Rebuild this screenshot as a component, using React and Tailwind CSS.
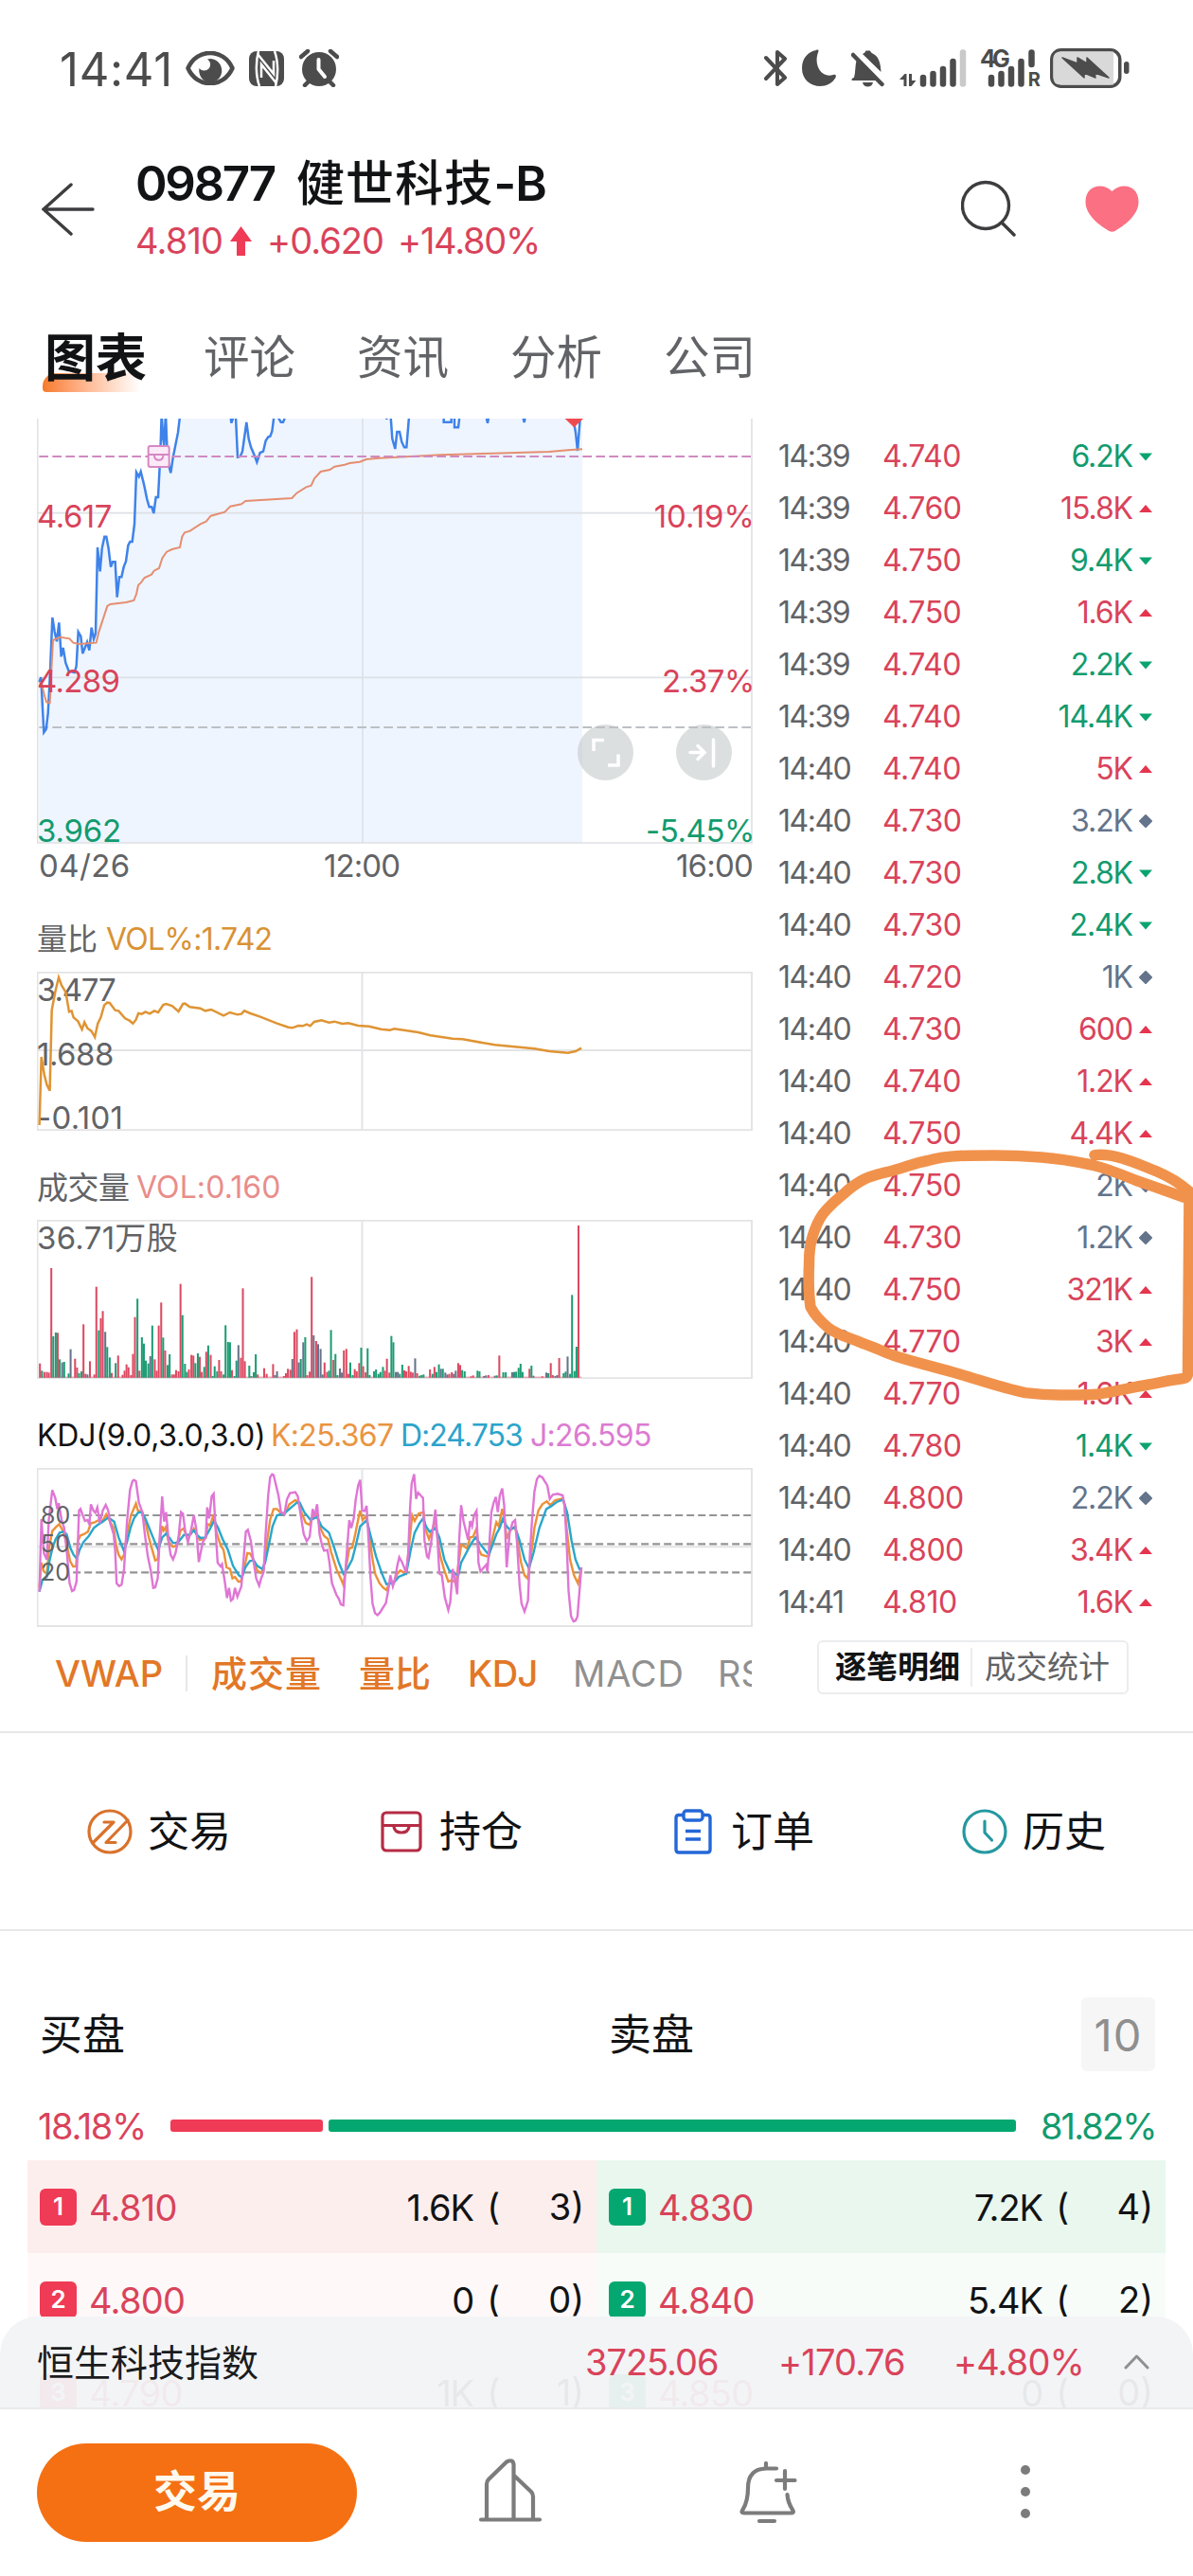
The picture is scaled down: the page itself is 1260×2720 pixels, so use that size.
import React from 'react';

const RED = '#d9435a';
const GREEN = '#129b6e';
const SLATE = '#64748b';

const trades = [
    ['14:39', '4.740', '6.2K', 'down'],
    ['14:39', '4.760', '15.8K', 'up'],
    ['14:39', '4.750', '9.4K', 'down'],
    ['14:39', '4.750', '1.6K', 'up'],
    ['14:39', '4.740', '2.2K', 'down'],
    ['14:39', '4.740', '14.4K', 'down'],
    ['14:40', '4.740', '5K', 'up'],
    ['14:40', '4.730', '3.2K', 'flat'],
    ['14:40', '4.730', '2.8K', 'down'],
    ['14:40', '4.730', '2.4K', 'down'],
    ['14:40', '4.720', '1K', 'flat'],
    ['14:40', '4.730', '600', 'up'],
    ['14:40', '4.740', '1.2K', 'up'],
    ['14:40', '4.750', '4.4K', 'up'],
    ['14:40', '4.750', '2K', 'flat'],
    ['14:40', '4.730', '1.2K', 'flat'],
    ['14:40', '4.750', '321K', 'up'],
    ['14:40', '4.770', '3K', 'up'],
    ['14:40', '4.770', '1.6K', 'up'],
    ['14:40', '4.780', '1.4K', 'down'],
    ['14:40', '4.800', '2.2K', 'flat'],
    ['14:40', '4.800', '3.4K', 'up'],
    ['14:41', '4.810', '1.6K', 'up'],
];

const bids = [
    ['1', '4.810', '1.6K', '3'],
    ['2', '4.800', '0', '0'],
    ['3', '4.790', '1K', '1'],
];

const asks = [
    ['1', '4.830', '7.2K', '4'],
    ['2', '4.840', '5.4K', '2'],
    ['3', '4.850', '0', '0'],
];

const priceLine = '124,900 130,886 139,1060 146,1050 152,1000 158,890 166,696 173,740 180,772 187,712 194,820 200,792 208,840 218,866 236,870 242,850 248,742 256,756 262,810 269,792 276,774 283,800 290,728 297,764 303,746 309,474 317,550 323,478 331,440 337,440 344,478 351,536 357,520 365,520 371,632 378,568 385,568 392,536 399,518 406,468 412,456 419,456 426,400 432,236 440,250 446,234 456,274 466,322 473,346 481,346 487,366 494,315 501,315 508,180 512,50 517,130 520,150 525,50 529,150 534,210 541,238 548,190 564,110 571,50 571,30 728,30 733,80 740,60 747,60 753,188 761,186 768,170 781,78 788,130 795,156 806,182 814,204 824,174 834,170 842,136 850,124 856,122 862,106 868,60 880,60 890,77 897,77 904,60 904,30 1218,30 1225,68 1232,40 1238,60 1243,130 1252,162 1258,108 1266,108 1273,140 1281,157 1288,157 1296,60 1296,30 1406,30 1406,77 1430,77 1430,30 1440,60 1440,94 1452,94 1456,60 1456,30 1534,30 1545,80 1554,30 1650,30 1661,78 1670,30 1810,30 1824,110 1830,168 1838,66 1845,30';

const vwapLine = '124,900 132,905 140,940 147,964 158,966 163,860 168,768 190,758 220,763 232,776 250,780 305,776 313,742 340,660 350,654 400,648 424,642 432,622 438,594 448,584 458,570 480,560 488,548 504,540 514,508 528,488 545,480 570,474 577,440 585,427 602,422 635,400 653,392 668,374 712,362 730,344 765,337 778,327 925,318 940,302 970,283 986,278 996,256 1016,234 1045,228 1060,218 1092,212 1108,207 1140,203 1160,195 1200,191 1300,186 1400,181 1560,176 1740,171 1800,166 1845,163';

const volRatioLine = '80,684 84,468 90,525 95,556 101,575 105,320 112,262 119,216 125,242 133,262 140,325 145,322 149,343 158,355 166,381 171,358 177,377 185,386 192,405 198,362 204,343 211,304 217,296 222,297 233,320 240,322 253,346 262,353 269,362 275,350 280,330 287,332 294,325 303,331 312,322 320,327 330,303 336,300 348,306 361,324 370,300 374,299 384,310 405,314 415,322 427,318 452,337 465,327 480,334 488,332 494,322 506,330 525,340 560,362 583,374 591,376 603,369 612,370 620,365 627,370 635,357 650,352 665,359 676,356 692,363 704,361 724,369 746,371 770,380 788,383 797,379 845,390 870,400 915,410 935,412 1000,430 1080,442 1110,450 1148,455 1163,450 1175,440';

const jLine = '80,602 84,372 89,480 95,500 99,375 106,280 112,305 116,340 119,322 125,375 130,400 135,470 141,575 146,600 150,597 155,570 160,345 163,340 168,362 172,378 177,375 181,388 184,325 189,345 193,352 197,335 202,385 208,345 214,327 219,345 223,385 230,420 233,470 236,575 241,584 246,580 251,530 257,380 263,280 268,252 271,248 275,252 281,320 288,350 293,420 299,490 305,535 310,590 314,588 319,560 323,430 328,300 332,380 336,350 341,440 345,485 350,500 355,480 361,430 366,350 370,355 375,415 380,445 386,410 392,360 397,405 402,508 410,445 416,430 419,335 423,370 428,300 432,292 436,405 440,510 446,522 449,515 455,575 459,622 463,590 467,630 471,625 475,590 480,618 488,585 492,510 497,412 501,406 507,440 512,500 518,560 524,583 528,560 533,540 537,420 542,300 546,240 550,230 553,232 558,265 563,298 568,350 575,356 580,310 586,290 597,287 602,300 608,360 614,420 620,442 626,428 632,340 636,365 641,325 646,420 651,455 655,472 662,470 666,510 671,575 680,612 685,625 689,642 694,645 698,540 706,375 710,400 715,370 719,310 724,265 728,248 732,345 737,346 741,330 745,440 749,560 753,640 758,670 763,676 768,668 780,638 785,595 789,550 794,585 798,565 803,520 807,493 813,510 821,542 825,480 829,330 832,260 837,230 841,308 845,288 855,305 858,440 863,490 866,495 871,450 876,390 880,342 884,430 888,545 893,550 899,620 906,660 910,635 915,530 919,560 924,610 928,440 932,328 937,380 946,438 950,378 954,395 958,360 963,346 967,510 971,538 983,516 985,540 989,450 993,350 998,318 1002,302 1006,350 1010,298 1015,275 1019,330 1024,525 1030,415 1036,382 1041,375 1045,450 1050,580 1054,640 1060,665 1067,630 1071,480 1075,380 1080,285 1085,245 1090,235 1096,240 1106,265 1111,308 1117,295 1127,292 1137,297 1141,330 1145,440 1149,600 1154,680 1159,696 1163,694 1167,680 1171,600 1175,525';

const kLine = '80,590 84,510 89,538 95,545 100,460 106,410 113,398 120,388 128,410 135,450 142,505 148,522 154,522 158,440 163,424 170,420 178,412 184,385 192,382 200,375 207,380 215,357 222,378 230,400 235,455 240,485 246,500 251,485 257,420 265,360 275,323 279,345 288,350 294,380 301,430 308,470 314,503 319,500 323,440 328,394 331,408 335,398 341,445 350,460 358,455 365,408 371,402 378,425 386,420 392,402 398,420 404,438 411,435 416,432 420,388 425,392 432,357 438,415 446,455 452,470 458,525 465,530 470,560 475,555 482,570 487,570 493,535 500,480 506,482 512,500 520,535 527,542 533,530 540,440 546,375 553,340 560,340 567,352 576,354 585,325 597,312 603,318 609,350 618,384 626,390 632,365 640,352 646,395 655,425 663,435 669,475 680,530 690,565 694,580 700,520 706,465 712,462 718,420 725,365 728,345 733,375 740,362 745,400 752,490 758,545 767,575 775,590 781,597 787,575 795,575 803,545 809,535 821,545 826,470 833,360 838,378 846,355 856,350 860,405 867,435 873,410 880,372 884,430 890,490 897,530 906,570 914,565 922,575 926,520 932,455 938,458 944,465 950,430 956,428 963,402 968,470 973,485 984,490 988,490 994,440 1003,382 1008,395 1015,340 1020,375 1024,435 1030,410 1041,395 1046,440 1053,510 1060,550 1066,560 1072,500 1080,400 1088,345 1096,325 1105,316 1112,328 1122,312 1135,308 1140,320 1145,400 1152,500 1160,550 1168,576 1175,530';

const dLine = '80,602 86,565 95,555 101,500 107,460 113,435 121,415 128,412 135,420 143,465 149,485 156,498 161,470 169,445 180,425 190,400 200,388 208,380 219,367 231,380 240,430 250,470 256,450 264,400 271,370 279,352 286,350 294,370 303,405 312,440 320,470 328,430 336,418 343,432 350,448 360,446 372,422 382,422 392,408 400,425 406,432 415,430 424,405 433,377 441,400 450,435 461,470 471,520 483,550 489,557 496,525 505,505 513,503 520,520 530,530 536,510 544,450 551,395 560,360 575,354 585,340 600,320 606,320 615,350 628,375 641,365 650,395 665,415 675,460 685,510 694,545 702,530 712,500 720,450 728,395 741,376 750,430 760,490 772,545 781,578 795,575 806,555 821,545 830,470 838,415 848,385 855,370 861,395 868,412 876,405 880,400 888,430 898,500 908,535 916,540 926,552 932,510 942,480 952,450 961,430 970,450 980,470 988,485 995,455 1003,420 1010,400 1016,372 1024,395 1030,405 1041,398 1050,440 1060,500 1069,528 1078,480 1090,400 1104,340 1113,332 1125,318 1138,310 1146,350 1155,440 1163,500 1171,530 1175,528';

// colour letter, x and height of every volume bar
const volumeBars = 'r81:45 g85:22 r90:18 r95:18 r99:16 r104:347 g108:131 g113:143 r117:142 g121:58 s126:48 g130:50 g139:13 s143:90 r152:60 r156:32 g160:14 g165:20 r169:169 r173:12 s177:10 r182:52 r191:10 r195:288 g200:150 r204:188 r208:211 s213:145 g217:97 g222:64 r226:15 g234:46 r239:70 r248:9 r252:22 r256:42 r260:33 r265:8 r269:75 r273:192 g278:250 r282:22 g287:128 g291:108 g295:54 g300:45 s304:68 g308:165 r313:58 r317:22 r321:165 r326:238 g330:127 r334:86 g339:40 g343:74 r348:10 r352:10 r356:24 r361:20 r365:297 g369:198 g374:44 g378:18 r382:26 r387:72 r391:70 g395:46 g400:77 r404:66 r408:18 g413:34 r417:82 g421:102 r426:72 g430:5 g434:36 g439:20 r443:56 r447:20 g452:10 g456:166 g461:113 g465:112 r469:24 g474:5 g478:54 s482:103 r487:63 r491:283 r495:52 g504:38 g508:5 g513:17 g517:74 r521:10 r534:30 r539:12 r552:43 s556:8 s560:20 r574:5 r578:14 r582:28 r587:25 s591:59 r595:145 r600:153 s604:48 g608:59 s613:112 g617:128 r621:8 r626:19 r630:319 s634:134 r639:116 s643:106 s648:91 s652:10 r656:48 r661:18 g665:22 g669:151 r674:56 g678:75 g682:8 s687:29 s691:16 r695:86 r700:91 r704:12 g708:48 g713:8 r717:27 r721:20 r726:46 g730:95 r734:36 r739:17 g743:93 g747:8 g756:20 g760:26 g765:12 g769:18 g774:34 r778:22 r782:60 r787:16 g791:132 g795:112 s800:18 s804:18 g808:12 g813:41 r817:23 r821:20 r826:37 r830:19 r834:16 s839:61 r843:14 g848:6 g852:8 g856:10 r869:26 g874:12 r878:34 g882:18 g887:42 s891:28 g895:28 s900:16 s904:10 r908:12 r913:17 s917:12 s921:22 r926:46 r930:40 g934:24 g939:20 r952:4 r956:7 g965:22 g969:20 s978:5 s982:7 r987:8 s1000:6 g1004:7 r1009:70 g1017:17 g1022:17 s1035:17 g1039:18 g1043:19 g1048:31 g1052:44 g1056:18 r1070:28 g1074:38 s1078:6 r1096:4 s1104:16 g1108:14 r1113:46 r1117:8 s1122:5 s1126:8 r1130:62 g1139:14 g1143:19 s1147:67 g1152:12 g1156:262 g1161:21 g1165:98 r1169:482'
    .split(' ')
    .map(b => ({ c: b[0], x: Number(b.slice(1).split(':')[0]), h: Number(b.split(':')[1]) }));

const barColor = { r: '#dc4a62', g: '#1d9c74', s: '#66738a' };

function StatusBar() {
    return (
        <div className="flex h-[144px] items-center pl-[63px] pr-[67px] text-[#4c4c4c]">
            <span className="w-[133px] pt-0.5 text-[49px] leading-none tracking-[0.7px]">14:41</span>
            <svg width="52" height="36" viewBox="0 0 52 36" className="mr-[15px]">
                <path d="M2.500 18C12 -3.500 40 -3.500 49.500 18C40 39.500 12 39.500 2.500 18Z" fill="none" stroke="currentColor" strokeWidth="4.500" strokeLinejoin="round" />
                <path d="M23 8.500A12 12.500 0 1 1 14.500 18A6.500 6.500 0 1 0 23 8.500Z" fill="currentColor" />
            </svg>
            <svg width="37" height="37" viewBox="0 0 37 37" className="mr-4">
                <rect width="37" height="37" rx="8" fill="currentColor" />
                <path d="M10 0C7 11 7 26 11 37M27 0C31 11 31 26 28 37" fill="none" stroke="#fff" strokeWidth="2.500" />
                <path d="M9 3L26 24V10M29 34L13 14V28" fill="none" stroke="#fff" strokeWidth="2.500" />
            </svg>
            <svg width="42" height="40" viewBox="0 0 42 40">
                <circle cx="21" cy="21" r="18" fill="currentColor" />
                <path d="M2 8L9 2M40 8L33 2M6 38L11 33M36 38L31 33" stroke="currentColor" strokeWidth="4.500" strokeLinecap="round" />
                <path d="M20.500 11V21L27 29" fill="none" stroke="#fff" strokeWidth="4" strokeLinecap="round" strokeLinejoin="round" />
            </svg>
            <svg width="24" height="40" viewBox="0 0 24 40" className="ml-auto mr-4">
                <path d="M2 9L22 30L14 37V3L22 10L2 31" fill="none" stroke="currentColor" strokeWidth="4" strokeLinecap="round" strokeLinejoin="round" />
            </svg>
            <svg width="36" height="40" viewBox="0 0 36 40" className="mr-4">
                <path d="M15 1C17 0 18 1 17.200 3C12 16 20 31 33 27C35.500 26.300 36.500 27.500 35.500 30C27 45 0 41 0 20C0 9 7 2.500 15 1Z" fill="currentColor" />
            </svg>
            <svg width="35" height="40" viewBox="0 0 35 40" className="mr-4">
                <path d="M5.500 12L28 33H1.500C-.5 33 .5 30.500 3 30C4.500 25 4 18 5.500 12ZM12 5C14 4 15 3 15.500 1.500H20C20.500 3 21.500 4 23.500 5C29 8 31 14 31.500 24ZM12 35H23C22 41 13 41 12 35Z" fill="currentColor" />
                <path d="M2 6L32.500 37" stroke="currentColor" strokeWidth="4.500" strokeLinecap="round" />
            </svg>
            <svg width="71" height="40" viewBox="0 0 71 40" className="mr-[14px]">
                <path d="M0 32L5.500 26H7.500V39H4.500V32ZM17.500 33L12.500 39H10V26H13V33Z" fill="currentColor" />
                <path d="M25 30V36.500M35.500 26V36.500M46 21V36.500M56.500 13V36.500" stroke="currentColor" strokeWidth="6.500" strokeLinecap="round" />
                <path d="M67 3.500V36.500" stroke="#c9c9c9" strokeWidth="6.500" strokeLinecap="round" />
            </svg>
            <div className="relative mr-[13px] h-10 w-[61px]">
                <svg width="61" height="40" viewBox="0 0 61 40">
                    <path d="M12 30V36.500M22.500 26V36.500M33 21V36.500M43.500 13V36.500M54.500 3.500V16" stroke="currentColor" strokeWidth="6.500" strokeLinecap="round" />
                </svg>
                <span className="absolute left-0 top-0 text-[25px] font-bold leading-[20px] tracking-[-4px]">4G</span>
                <span className="absolute right-0 top-6 text-[20px] font-bold leading-[16px] tracking-[-3px]">R</span>
            </div>
            <svg width="84" height="42" viewBox="0 0 84 42">
                <rect x="1.750" y="1.750" width="72" height="38.500" rx="10" fill="#fff" stroke="currentColor" strokeWidth="3.500" />
                <path d="M11 3.500H67V38.500H11Q3.500 38.500 3.500 31V11Q3.500 3.500 11 3.500Z" fill="#d9d9d9" />
                <path d="M13 10L29 16V10L39 16V10L62 31L47 26L48 31L36 26V31Z" fill="currentColor" stroke="currentColor" strokeWidth="1.500" strokeLinejoin="round" />
                <rect x="78" y="14" width="5.500" height="13" rx="2.700" fill="currentColor" />
            </svg>
        </div>
    );
}

function Header() {
    return (
        <div className="flex h-[168px] pl-11 pt-[19px]">
            <div className="flex h-[116px] w-[99px] items-center">
                <svg width="56" height="58" viewBox="0 0 56 58" fill="none" stroke="#3d3d3f" strokeWidth="3.400" strokeLinecap="round">
                    <path d="M54 29H2M31 3L2 29L31 55" />
                </svg>
            </div>
            <div>
                <div className="flex h-[61px] items-center text-[51px] leading-none text-[#121314]">
                    <span className="w-[170px] font-semibold tracking-[-2.400px]">09877</span>
                    <span className="whitespace-nowrap font-medium tracking-[1.100px]">健世科技<span className="font-semibold tracking-[-0.860px]">-B</span></span>
                </div>
                <div className="flex h-[60px] items-center text-[38px] leading-none text-[#d9435a]">
                    <span className="w-[100px] tracking-[-0.830px]">4.810</span>
                    <svg width="23" height="31" viewBox="0 0 23 31" className="mr-[16px]">
                        <path d="M11.500 0L23 16H16V31H7V16H0Z" fill="#ef3b55" />
                    </svg>
                    <span className="w-[138px] tracking-[-0.970px]">+0.620</span>
                    <span className="tracking-[-1.240px]">+14.80%</span>
                </div>
            </div>
            <div className="ml-auto flex h-[114px] items-center pr-[57px]">
                <svg width="59" height="60" viewBox="0 0 59 60" fill="none" stroke="#3d3d3f" strokeWidth="3.400" strokeLinecap="round" className="mr-[72px]">
                    <circle cx="26" cy="27" r="24.500" />
                    <path d="M44 46L56 58" />
                </svg>
                <svg width="57" height="49" viewBox="0 0 57 49">
                    <path d="M28.500 6C37 -3.500 56.500 -1.500 56.500 17C56.500 32 40 43 31.500 48Q28.500 49.500 25.500 48C17 43 .5 32 .5 17C.5 -1.500 20 -3.500 28.500 6Z" fill="#fb7083" />
                </svg>
            </div>
        </div>
    );
}

function PageTabs() {
    return (
        <div className="flex h-[130px] items-center pl-[47px] pt-[3px] text-[48.500px] leading-none text-[#626366]">
            <div className="relative w-[168px] text-[54px] font-bold text-[#121314]">
                <div className="absolute -left-0.5 top-[42px] h-5 w-[103px] rounded-bl rounded-tl-[14px] bg-gradient-to-r from-[#f67a26] to-white" />
                <span className="relative">图表</span>
            </div>
            <span className="w-[162px]">评论</span>
            <span className="w-[162px]">资讯</span>
            <span className="w-[162px]">分析</span>
            <span>公司</span>
        </div>
    );
}

function PriceChart() {
    return (
        <div className="relative h-[449px] text-[33px] leading-none text-[#d9435a]">
            <svg width="756" height="449" viewBox="117 66 2268 1347" fill="none">
                <polygon points={`124,1410 ${priceLine} 1845,1410`} fill="#eef5ff" />
                <path d="M119 66V1410H2382V66M119 365H2382M119 886H2382M1149 66V1410" stroke="#dee1e5" strokeWidth="5" />
                <path d="M124 1044H2382" stroke="#bcc0c4" strokeWidth="6" strokeDasharray="29 13" />
                <polyline points={priceLine} stroke="#3f83ea" strokeWidth="7.500" />
                <polyline points={vwapLine} stroke="#e58e70" strokeWidth="6" />
                <path d="M124 186H2382" stroke="#cf8ac0" strokeWidth="6" strokeDasharray="29 13" />
                <rect x="470" y="153" width="66" height="66" rx="6" fill="#fbeaf7" stroke="#d688c4" strokeWidth="6" />
                <path d="M470 180H536M489 182Q489 197 503 197Q517 197 517 182" stroke="#d688c4" strokeWidth="6" />
                <path d="M1790 66H1848L1819 94Z" fill="#ee4b4f" />
            </svg>
            <span className="absolute left-0 top-[87px] tracking-[-0.500px]">4.617</span>
            <span className="absolute left-0 top-[261px] tracking-[-0.700px]">4.289</span>
            <span className="absolute left-0 top-[419px] tracking-[-0.200px] text-[#129b6e]">3.962</span>
            <span className="absolute -right-0.5 top-[87px]">10.19%</span>
            <span className="absolute -right-0.5 top-[261px] tracking-[-0.450px]">2.37%</span>
            <span className="absolute -right-0.5 top-[419px] tracking-[-0.450px] text-[#129b6e]">-5.45%</span>
            <svg width="59" height="59" viewBox="0 0 59 59" className="absolute left-[571px] top-[323px]" fill="none" stroke="#fff" strokeWidth="3.500">
                <circle cx="29.500" cy="29.500" r="29.500" fill="#b9bfbf" fillOpacity=".5" stroke="none" />
                <path d="M28 16.500H17V28M32 43H43V31.500" />
            </svg>
            <svg width="59" height="59" viewBox="0 0 59 59" className="absolute left-[675px] top-[323px]" fill="none" stroke="#fff" strokeWidth="3.500" strokeLinecap="round">
                <circle cx="29.500" cy="29.500" r="29.500" fill="#b9bfbf" fillOpacity=".5" stroke="none" />
                <path d="M15 29.500H29M23 22.500L30 29.500L23 36.500M39.500 16V44" />
            </svg>
        </div>
    );
}

function ChartColumn() {
    return (
        <div className="w-[756px] text-[#626366]">
            <PriceChart />
            <div className="flex h-[47px] items-center text-[33px] leading-none">
                <span className="w-[303px] pl-[2px] tracking-[0.400px]">04/26</span>
                <span className="tracking-[-0.900px]">12:00</span>
                <span className="ml-auto tracking-[-0.800px]">16:00</span>
            </div>

            {/* Volume ratio */}
            <div className="flex h-[88px] items-center pt-5 text-[32px] leading-none">
                <span className="w-[73px]">量比</span>
                <span className="tracking-[-0.700px] text-[#d99234]">VOL%:1.742</span>
            </div>
            <div className="relative h-[168px] text-[33px] leading-none">
                <svg width="756" height="168" viewBox="75 198 1446 504" preserveAspectRatio="none" fill="none">
                    <path d="M76 200H1519V700H76ZM76 447H1519M732 200V700" stroke="#e3e4e6" strokeWidth="2" vectorEffect="non-scaling-stroke" />
                </svg>
                <span className="absolute left-0 top-[3px] tracking-[-1.200px]">3.477</span>
                <span className="absolute left-0 top-[71px] tracking-[-0.500px]">1.688</span>
                <span className="absolute left-0 top-[138px] tracking-[0.300px]">-0.101</span>
                <svg width="756" height="168" viewBox="75 198 1446 504" preserveAspectRatio="none" fill="none" className="absolute left-0 top-0">
                    <polyline points={volRatioLine} stroke="#df9434" strokeWidth="2.500" vectorEffect="non-scaling-stroke" />
                </svg>
            </div>

            {/* Volume */}
            <div className="flex h-[94px] items-center pt-[26px] leading-none">
                <span className="w-[105px] text-[33px] tracking-[-0.500px]">成交量</span>
                <span className="text-[32px] tracking-[0.100px] text-[#e98d8a]">VOL:0.160</span>
            </div>
            <div className="relative h-[168px] text-[33px] leading-none">
                <svg width="756" height="168" viewBox="75 204 1446 504" preserveAspectRatio="none" fill="none">
                    <path d="M76 206H1519V706H76ZM732 206V706" stroke="#e3e4e6" strokeWidth="2" vectorEffect="non-scaling-stroke" />
                    <path d="M79 703H1175" stroke="#e7a9b5" strokeWidth="1.500" vectorEffect="non-scaling-stroke" />
                    {volumeBars.map(b => (
                        <rect key={b.x} x={b.x - 1.9} y={704 - b.h} width="3.9" height={b.h} fill={barColor[b.c]} />
                    ))}
                </svg>
                <span className="absolute left-0 top-[3px] whitespace-nowrap tracking-[0.300px]">36.71万股</span>
            </div>

            {/* KDJ */}
            <div className="flex h-[94px] items-center pt-[26px] text-[32px] leading-none">
                <span className="w-[247px] tracking-[-0.170px] text-[#121314]">KDJ(9.0,3.0,3.0)</span>
                <span className="w-[137px] tracking-[-0.690px] text-[#ea9440]">K:25.367</span>
                <span className="w-[137px] tracking-[-0.990px] text-[#2ba4cb]">D:24.753</span>
                <span className="tracking-[-0.690px] text-[#dc7bd2]">J:26.595</span>
            </div>
            <div className="relative h-[168px] text-[25px] leading-none">
                <svg width="756" height="168" viewBox="75 210 1446 504" preserveAspectRatio="none" fill="none">
                    <path d="M76 212H1519V711H76ZM76 460H1519M732 212V711" stroke="#e3e4e6" strokeWidth="2" vectorEffect="non-scaling-stroke" />
                    <path d="M148 360H1519M148 451H1519M148 541H1519" stroke="#949494" strokeWidth="2.200" strokeDasharray="8 4" vectorEffect="non-scaling-stroke" />
                    <polyline points={kLine} stroke="#ec9138" strokeWidth="2.400" vectorEffect="non-scaling-stroke" />
                    <polyline points={dLine} stroke="#2aa6cc" strokeWidth="2.400" vectorEffect="non-scaling-stroke" />
                    <polyline points={jLine} stroke="#df76d5" strokeWidth="2.400" vectorEffect="non-scaling-stroke" />
                </svg>
                <span className="absolute left-1 top-[38px]">80</span>
                <span className="absolute left-1 top-[68px]">50</span>
                <span className="absolute left-1 top-[98px]">20</span>
            </div>

            {/* Indicator switcher */}
            <div className="flex h-[97px] w-[755px] items-center overflow-hidden whitespace-nowrap pl-[19px] text-[38px] leading-none text-[#e27727]">
                <span className="w-[138px] shrink-0 font-medium">VWAP</span>
                <span className="h-[38px] w-[27px] shrink-0 border-l-2 border-[#e6e7e9]" />
                <span className="w-[156px] shrink-0 font-medium tracking-[1px]">成交量</span>
                <span className="w-[115px] shrink-0 font-medium">量比</span>
                <span className="w-[111px] shrink-0 font-medium tracking-[-0.500px]">KDJ</span>
                <span className="w-[153px] shrink-0 tracking-[0.800px] text-[#909090]">MACD</span>
                <span className="shrink-0 text-[#909090]">RSI</span>
            </div>
        </div>
    );
}

function Marker({ dir }) {
    if (dir === 'flat') {
        return <svg width="14" height="14" viewBox="0 0 14 14"><path d="M7 1L13 7L7 13L1 7Z" fill={SLATE} stroke={SLATE} strokeWidth="2" strokeLinejoin="round" /></svg>;
    }
    return (
        <svg width="14" height="14" viewBox="0 0 14 14">
            <path d={dir === 'up' ? 'M7 3L14 11H0Z' : 'M7 11.500L14 3.500H0Z'} fill={dir === 'up' ? '#e5354f' : '#0aa371'} />
        </svg>
    );
}

function TradeColumn() {
    const color = { up: RED, down: GREEN, flat: SLATE };
    return (
        <div className="relative ml-[27px] w-[438px] pt-3">
            {trades.map(([time, price, vol, dir], i) => (
                <div key={i} className="flex h-[55px] items-center pr-[43px] text-[32px] leading-none">
                    <span className="w-[110px] tracking-[-1.500px] text-[#626366]">{time}</span>
                    <span className="tracking-[-0.500px] text-[#d9435a]">{price}</span>
                    <span className="ml-auto mr-[7px] tracking-[-1.100px]" style={{ color: color[dir] }}>{vol}</span>
                    <Marker dir={dir} />
                </div>
            ))}
            <div className="ml-[41px] mt-[13px] flex h-[57px] w-[329px] items-center rounded-md border-2 border-[#ebecee] text-[33px] leading-none">
                <span className="w-[162px] border-r-2 border-[#ebecee] py-1 pl-[17px] font-bold text-[#121314]">逐笔明细</span>
                <span className="pl-[13px] text-[#626366]">成交统计</span>
            </div>
            {/* hand-drawn mark over the big print */}
            <svg width="438" height="320" viewBox="822 1180 438 320" className="pointer-events-none absolute left-0 top-[738px]" fill="none" stroke="#f1924c" strokeWidth="11.500" strokeLinecap="round" strokeLinejoin="round">
                <path d="M1156 1219.600C1178 1217 1204 1230 1222 1237C1236 1243 1248 1251 1256 1258L1254.500 1450Q1254.500 1455 1250 1455.500C1230 1458 1222 1460.500 1213 1462C1192 1465.500 1178 1469.500 1160 1472C1146 1473.300 1132 1473 1120 1473C1106 1473 1094 1472 1083 1470.600C1056 1465 1032 1456 1006.700 1449C982 1442 964 1438 943 1431C930 1426 922 1422 910 1418C896 1412 886 1410 876 1403C866 1395 860 1388 856 1380C854 1366 854 1346 854.500 1335C854.500 1322 855 1315 858 1306C861 1296 864 1289 869 1282C876 1273 882 1268 890 1261.600C898 1254 905 1249 913 1245C924 1240 932 1239 943 1236C958 1232 966 1228 980 1225.500C992 1222 1002 1221 1013 1220.500C1026 1220 1038 1220 1050 1220C1068 1220 1082 1220.500 1100 1222C1120 1223.500 1134 1226 1153 1230C1170 1234 1184 1240 1200 1246.500C1216 1252 1236 1259 1250 1264" />
            </svg>
        </div>
    );
}

function QuickActions() {
    return (
        <div className="grid h-[211px] grid-cols-4 border-y-2 border-[#e6e7e9] px-[14px] text-[44px] leading-none text-[#121314]">
            <div className="flex items-center justify-center gap-4">
                <svg width="48" height="48" viewBox="0 0 48 48" fill="none" stroke="#d9722b" strokeWidth="3.200" strokeLinecap="round" strokeLinejoin="round">
                    <circle cx="24" cy="24" r="22" />
                    <path d="M6 36L28 14H18M43 12L20 35.500H30" />
                </svg>
                交易
            </div>
            <div className="flex items-center justify-center gap-4">
                <svg width="48" height="48" viewBox="0 0 48 48" fill="none" stroke="#b52c45" strokeWidth="3.200" strokeLinejoin="round">
                    <rect x="4" y="4" width="40" height="40" rx="4" />
                    <path d="M4 17.500H44M16 18V19Q17 25 24 25Q31 25 32 19V18" />
                </svg>
                持仓
            </div>
            <div className="flex items-center justify-center gap-4">
                <svg width="48" height="48" viewBox="0 0 48 48" fill="none" stroke="#2467d8" strokeWidth="3.400" strokeLinejoin="round">
                    <path d="M14 6.500H9Q6 6.500 6 9.500V43Q6 46 9 46H39Q42 46 42 43V9.500Q42 6.500 39 6.500H34" />
                    <rect x="14" y="2" width="20" height="10" rx="3" />
                    <path d="M16 23.500H32M16 32H32" />
                </svg>
                订单
            </div>
            <div className="flex items-center justify-center gap-4">
                <svg width="48" height="48" viewBox="0 0 48 48" fill="none" stroke="#2598a0" strokeWidth="3.200" strokeLinecap="round" strokeLinejoin="round">
                    <circle cx="24" cy="24" r="22" />
                    <path d="M24 13V25L31.500 33" />
                </svg>
                历史
            </div>
        </div>
    );
}

function BookSide({ rows, badge, tints }) {
    return (
        <div className="w-[601px]">
            {rows.map(([level, price, qty, count], i) => (
                <div key={level} className={`flex h-[98px] items-center pl-[13px] pr-[13px] text-[38px] leading-none text-[#121314] ${tints[i]}`}>
                    <span className={`mr-[13px] flex h-[39px] w-[39px] items-center justify-center rounded-md text-[26px] font-semibold text-white ${badge}`}>{level}</span>
                    <span className="pt-0.5 tracking-[-0.700px] text-[#d9435a]">{price}</span>
                    <span className="ml-auto pt-0.5 tracking-[-1px]">{qty}</span>
                    <span className="ml-[14px]">(</span>
                    <span className="w-[89px] text-right">{count})</span>
                </div>
            ))}
        </div>
    );
}

function OrderBook() {
    return (
        <div className="pt-[70px]">
            <div className="flex h-[78px] items-center pl-[42px] pr-10 text-[45px] leading-none text-[#121314]">
                <span className="w-[601px]">买盘</span>
                <span>卖盘</span>
                <span className="ml-auto flex h-[78px] w-[78px] items-center justify-center rounded-md bg-[#f6f6f6] text-[47px] tracking-[1px] text-[#8f8f8f]">10</span>
            </div>
            <div className="flex h-[94px] items-center pl-10 pt-5 text-[38px] leading-none">
                <span className="w-[140px] pt-0.5 tracking-[-1.350px] text-[#d9435a]">18.18%</span>
                <span className="mr-[6px] h-[13px] w-[161px] rounded-[3px] bg-[#ef3b55]" />
                <span className="mr-[26px] h-[13px] w-[726px] rounded-[3px] bg-[#04a770]" />
                <span className="pt-0.5 tracking-[-1.900px] text-[#129b6e]">81.82%</span>
            </div>
            <div className="flex pl-[29px]">
                <BookSide rows={bids} badge="bg-[#ef3b55]" tints={['bg-[#fdeeee]', 'bg-[#fef8f8]', 'bg-[#fef8f8]']} />
                <BookSide rows={asks} badge="bg-[#04a770]" tints={['bg-[#e9f7ee]', 'bg-[#f7fcf8]', 'bg-[#f7fcf8]']} />
            </div>
        </div>
    );
}

function BottomDock() {
    return (
        <div className="absolute inset-x-0 bottom-0">
            <div className="flex h-[98px] items-center rounded-t-[40px] border-b-2 border-[#e9eaeb] bg-[#f2f3f5]/95 pl-[39px] pr-[46px] text-[38px] leading-none text-[#d9435a]">
                <span className="text-[39px] text-[#1b1c1e]">恒生科技指数</span>
                <span className="ml-auto w-[204px] tracking-[-1.030px]">3725.06</span>
                <span className="w-[185px] tracking-[-0.810px]">+170.76</span>
                <span className="w-[180px] tracking-[-0.900px]">+4.80%</span>
                <svg width="27" height="16" viewBox="0 0 27 16" fill="none" stroke="#8f9092" strokeWidth="3" strokeLinecap="round" strokeLinejoin="round">
                    <path d="M2 14L13.500 2L25 14" />
                </svg>
            </div>
            <div className="flex h-[176px] items-center bg-white pl-[39px] text-[#7c7c7c]">
                <button className="flex h-[104px] w-[338px] items-center justify-center rounded-full bg-[#f57012] pb-1 text-[46px] font-bold leading-none text-[#fffaf0]">交易</button>
                <svg width="68" height="68" viewBox="0 0 68 68" fill="none" stroke="currentColor" strokeWidth="4.200" strokeLinecap="round" strokeLinejoin="round" className="mb-1 ml-32">
                    <path d="M3 64.500H65M9 64V27Q9 24 11 22L30 3.500Q37 0 37.500 6.500V64M38 18L56 35Q58 37 58 40V64" />
                </svg>
                <svg width="62" height="66" viewBox="0 0 62 66" fill="none" stroke="currentColor" strokeWidth="4.200" strokeLinecap="round" strokeLinejoin="round" className="ml-[207px]">
                    <path d="M29 2V7M40 7.500H29Q10 8 10 28Q10 42 4.500 51Q2 54.500 6 54.500H55Q59.500 54.500 57 51Q52 43 51.500 35M49 10V29M40 20H59.500M22 63H38" />
                </svg>
                <svg width="12" height="58" viewBox="0 0 12 58" fill="currentColor" className="mb-[2px] ml-[235px]">
                    <circle cx="6" cy="6" r="5" />
                    <circle cx="6" cy="29" r="5" />
                    <circle cx="6" cy="52" r="5" />
                </svg>
            </div>
        </div>
    );
}

export default function App() {
    return (
        <div className="relative h-[2720px] w-[1260px] overflow-hidden bg-white font-['Inter','Noto_Sans_CJK_SC',sans-serif]">
            <StatusBar />
            <Header />
            <PageTabs />
            <div className="flex h-[1386px] pl-[39px]">
                <ChartColumn />
                <TradeColumn />
            </div>
            <QuickActions />
            <OrderBook />
            <BottomDock />
        </div>
    );
}
